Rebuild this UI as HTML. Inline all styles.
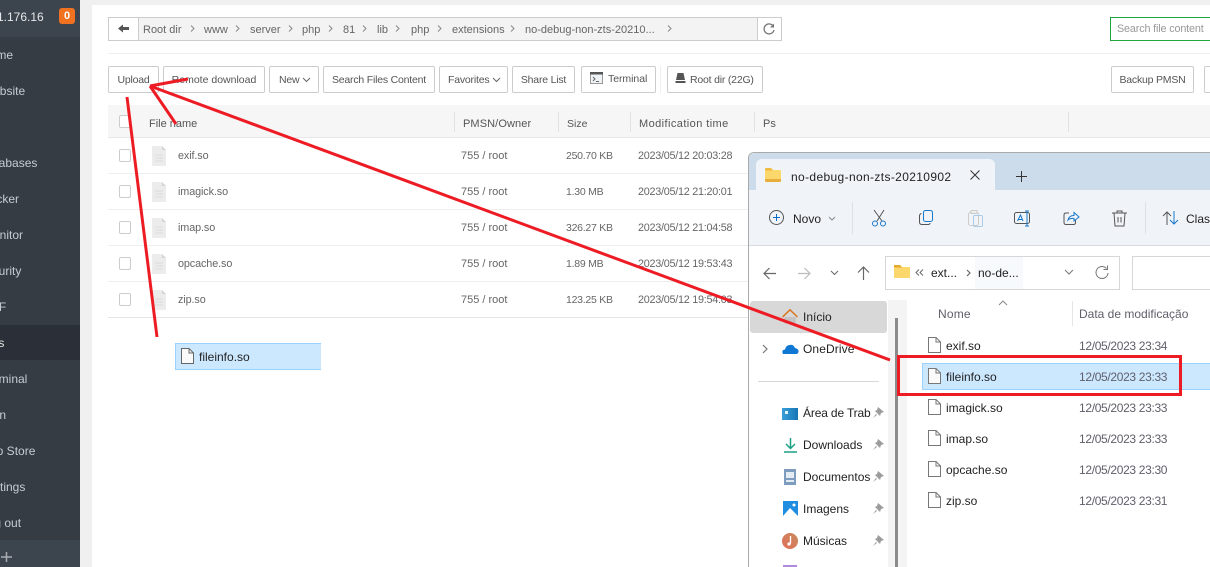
<!DOCTYPE html>
<html><head><meta charset="utf-8">
<style>
html,body{margin:0;padding:0}
body{width:1210px;height:567px;overflow:hidden;position:relative;background:#f0f0f0;font-family:"Liberation Sans",sans-serif;font-size:11px;color:#666}
.a{position:absolute;box-sizing:border-box;white-space:nowrap}
.t{position:absolute;white-space:nowrap;line-height:14px}
.s{position:absolute;white-space:nowrap;color:#c5ccd4;font-size:12px;line-height:14px;left:0}
.b{position:absolute;box-sizing:border-box;top:66px;height:27px;border:1px solid #ccc;border-radius:2px;background:#fff;color:#555;font-size:10.500px;letter-spacing:-.2px;line-height:26px;text-align:center;white-space:nowrap}
.cb{position:absolute;box-sizing:border-box;left:119px;width:12px;height:13px;border:1px solid #ccc;border-radius:2px;background:#fff}
.line{position:absolute;left:108px;width:640px;height:1px;background:#eee}
.x{font-size:12px;color:#222}
.g{font-size:12px;color:#5f5f6a}
.gd{font-size:12px;color:#5f5f6a;letter-spacing:-.33px}
.n{font-size:10.800px;letter-spacing:-.1px}
.d{font-size:10.800px;letter-spacing:-.25px}
.z{font-size:10.500px;letter-spacing:-.25px}
</style></head><body>
<div class="a" style="left:0;top:0;width:80px;height:567px;background:#353c44"></div>
<div class="a" style="left:0;top:0;width:80px;height:37px;background:#3c444d"></div>
<div class="a" style="left:0;top:540px;width:80px;height:27px;background:#3c444d"></div>
<div class="a" style="left:0;top:325px;width:80px;height:35px;background:#2b2f37"></div>
<div class="t" style="left:-3px;top:10px;font-size:12px;color:#e6e8ea">1.176.16</div>
<div class="a" style="left:59px;top:8px;width:16px;height:16px;background:#f0711f;border-radius:3px;color:#fff;font-size:11px;font-weight:bold;text-align:center;line-height:16px">0</div>
<div class="s" style="top:48px;left:-19px">Home</div>
<div class="s" style="top:84px;left:-18px">Website</div>
<div class="s" style="top:156px;left:-20px">Databases</div>
<div class="s" style="top:192px;left:-19px">Docker</div>
<div class="s" style="top:228px;left:-17px">Monitor</div>
<div class="s" style="top:264px;left:-22px">Security</div>
<div class="s" style="top:300px;left:-20px">WAF</div>
<div class="s" style="top:336px;left:-21px;color:#e8e8e8">Files</div>
<div class="s" style="top:372px;left:-18px">Terminal</div>
<div class="s" style="top:408px;left:-20px">Cron</div>
<div class="s" style="top:444px;left:-18px">App Store</div>
<div class="s" style="top:480px;left:-18px">Settings</div>
<div class="s" style="top:516px;left:-19px">Log out</div>
<svg class="a" style="left:0;top:550px" width="14" height="14"><path d="M1 7H12M6.500 2V12" stroke="#a9adb1" stroke-width="1.500" fill="none"/></svg>

<div class="a" style="left:92px;top:5px;width:1118px;height:562px;background:#fff"></div>

<div class="a" style="left:108px;top:17px;width:674px;height:24px;border:1px solid #ccc;border-radius:2px;background:#f3f3f3"></div>
<div class="a" style="left:108px;top:17px;width:31px;height:24px;border:1px solid #ccc;background:#fff"></div>
<svg class="a" style="left:118px;top:24px" width="12" height="10"><path d="M0 4.500L5 0.500V3H11V6H5V8.500Z" fill="#555"/></svg>
<div class="a" style="left:757px;top:17px;width:25px;height:24px;border:1px solid #ccc;background:#fff"></div>
<svg class="a" style="left:762px;top:22px" width="14" height="14" viewBox="0 0 14 14"><path d="M11.500 4.500A5 5 0 1 0 12 8" stroke="#777" stroke-width="1.300" fill="none"/><path d="M12 1.500V5.500H8Z" fill="#777"/></svg>
<div class="t" style="left:143px;top:23px">Root dir</div>
<div class="t" style="left:204px;top:23px">www</div>
<div class="t" style="left:250px;top:23px">server</div>
<div class="t" style="left:302px;top:23px">php</div>
<div class="t" style="left:343px;top:23px">81</div>
<div class="t" style="left:377px;top:23px">lib</div>
<div class="t" style="left:411px;top:23px">php</div>
<div class="t" style="left:452px;top:23px">extensions</div>
<div class="t" style="left:525px;top:23px">no-debug-non-zts-20210...</div>
<svg class="a" style="left:185px;top:24px" width="500" height="10" fill="none" stroke="#888" stroke-width="1"><path d="M6 2L9 5L6 8M51 2L54 5L51 8M104 2L107 5L104 8M144 2L147 5L144 8M178 2L181 5L178 8M211 2L214 5L211 8M253 2L256 5L253 8M326 2L329 5L326 8M483 2L486 5L483 8" transform="translate(0,-0.500)"/></svg>

<div class="a" style="left:108px;top:53px;width:1102px;height:1px;background:#eee"></div>
<div class="a" style="left:1110px;top:17px;width:100px;height:24px;border:1px solid #20a53a;border-right:0;color:#999;font-size:10.800px;letter-spacing:-.15px;line-height:23px;padding-left:6px">Search file content</div>

<div class="b" style="left:108px;width:51px">Upload</div>
<div class="b" style="left:163px;width:102px;letter-spacing:0">Remote download</div>
<div class="b" style="left:269px;width:50px;text-align:left;padding-left:9px">New<svg style="position:absolute;left:32px;top:10px" width="9" height="6"><path d="M1 1L4.500 4.500L8 1" stroke="#666" fill="none"/></svg></div>
<div class="b" style="left:323px;width:112px">Search Files Content</div>
<div class="b" style="left:439px;width:69px;text-align:left;padding-left:8px">Favorites<svg style="position:absolute;left:52px;top:10px" width="9" height="6"><path d="M1 1L4.500 4.500L8 1" stroke="#666" fill="none"/></svg></div>
<div class="b" style="left:512px;width:63px">Share List</div>
<div class="b" style="left:581px;width:75px;line-height:24px;text-align:left;padding-left:26px;letter-spacing:-.05px">Terminal</div>
<svg class="a" style="left:590px;top:72px" width="13" height="12"><rect x=".5" y=".5" width="12" height="11" fill="#eef3f7" stroke="#999"/><rect x="0" y="0" width="13" height="2.500" fill="#555"/><path d="M3 5L5 7L3 9M6 9.500H9" stroke="#666" fill="none"/></svg>
<div class="a" style="left:660px;top:66px;width:1px;height:27px;background:#eee"></div>
<div class="b" style="left:667px;width:96px;text-align:left;padding-left:22px">Root dir (22G)</div>
<svg class="a" style="left:675px;top:72px" width="11" height="12"><path d="M2.500 1H8.500L10 8H1Z" fill="#555"/><rect x="0.500" y="9" width="10" height="2" fill="#555"/></svg>
<div class="b" style="left:1111px;width:83px">Backup PMSN</div>
<div class="b" style="left:1204px;width:20px"></div>

<div class="a" style="left:108px;top:105px;width:1102px;height:33px;background:#f6f6f6;border-bottom:1px solid #e8e8e8"></div>
<div class="cb" style="top:115px"></div>
<div class="t" style="left:149px;top:117px;color:#555">File name</div>
<div class="a" style="left:454px;top:112px;width:1px;height:20px;background:#e2e2e2"></div>
<div class="a" style="left:558px;top:112px;width:1px;height:20px;background:#e2e2e2"></div>
<div class="a" style="left:630px;top:112px;width:1px;height:20px;background:#e2e2e2"></div>
<div class="a" style="left:754px;top:112px;width:1px;height:20px;background:#e2e2e2"></div>
<div class="a" style="left:1068px;top:112px;width:1px;height:20px;background:#e2e2e2"></div>
<div class="t" style="left:463px;top:117px;color:#555;letter-spacing:.1px">PMSN/Owner</div>
<div class="t" style="left:567px;top:117px;color:#555;font-size:10.500px">Size</div>
<div class="t" style="left:639px;top:117px;color:#555;letter-spacing:.42px">Modification time</div>
<div class="t" style="left:763px;top:117px;color:#555">Ps</div>

<div class="line" style="top:173px"></div><div class="line" style="top:209px"></div><div class="line" style="top:245px"></div><div class="line" style="top:281px"></div><div class="line" style="top:317px;background:#e6e6e6"></div>

<div class="cb" style="top:149px"></div><div class="cb" style="top:185px"></div><div class="cb" style="top:221px"></div><div class="cb" style="top:257px"></div><div class="cb" style="top:293px"></div>

<svg class="a" style="left:152px;top:146px" width="15" height="170" fill="#ececec">
<g><path d="M0 0H10L14 4V20H0Z"/><path d="M3 9H11M3 12H11M3 15H11" stroke="#dcdcdc"/><path d="M10 0L14 4H10Z" fill="#d5d5d5"/></g>
<g transform="translate(0,36)"><path d="M0 0H10L14 4V20H0Z"/><path d="M3 9H11M3 12H11M3 15H11" stroke="#dcdcdc"/><path d="M10 0L14 4H10Z" fill="#d5d5d5"/></g>
<g transform="translate(0,72)"><path d="M0 0H10L14 4V20H0Z"/><path d="M3 9H11M3 12H11M3 15H11" stroke="#dcdcdc"/><path d="M10 0L14 4H10Z" fill="#d5d5d5"/></g>
<g transform="translate(0,108)"><path d="M0 0H10L14 4V20H0Z"/><path d="M3 9H11M3 12H11M3 15H11" stroke="#dcdcdc"/><path d="M10 0L14 4H10Z" fill="#d5d5d5"/></g>
<g transform="translate(0,144)"><path d="M0 0H10L14 4V20H0Z"/><path d="M3 9H11M3 12H11M3 15H11" stroke="#dcdcdc"/><path d="M10 0L14 4H10Z" fill="#d5d5d5"/></g>
</svg>

<div class="t n" style="left:178px;top:149px">exif.so</div><div class="t" style="left:461px;top:149px">755 / root</div><div class="t z" style="left:566px;top:149px">250.70 KB</div><div class="t d" style="left:638px;top:149px">2023/05/12 20:03:28</div>
<div class="t n" style="left:178px;top:185px">imagick.so</div><div class="t" style="left:461px;top:185px">755 / root</div><div class="t z" style="left:566px;top:185px">1.30 MB</div><div class="t d" style="left:638px;top:185px">2023/05/12 21:20:01</div>
<div class="t n" style="left:178px;top:221px">imap.so</div><div class="t" style="left:461px;top:221px">755 / root</div><div class="t z" style="left:566px;top:221px">326.27 KB</div><div class="t d" style="left:638px;top:221px">2023/05/12 21:04:58</div>
<div class="t n" style="left:178px;top:257px">opcache.so</div><div class="t" style="left:461px;top:257px">755 / root</div><div class="t z" style="left:566px;top:257px">1.89 MB</div><div class="t d" style="left:638px;top:257px">2023/05/12 19:53:43</div>
<div class="t n" style="left:178px;top:293px">zip.so</div><div class="t" style="left:461px;top:293px">755 / root</div><div class="t z" style="left:566px;top:293px">123.25 KB</div><div class="t d" style="left:638px;top:293px">2023/05/12 19:54:03</div>

<div class="a" style="left:175px;top:343px;width:146px;height:27px;background:#cce8ff;border:1px solid #99d1ff;border-right:0"></div>
<svg class="a" style="left:181px;top:348px" width="13" height="16"><path d="M.5.5H8L12.500 5V15.500H.5Z" fill="#fafafa" stroke="#666"/><path d="M8 .5V5H12.500" fill="none" stroke="#666"/></svg>
<div class="t x" style="left:199px;top:350px">fileinfo.so</div>

<!-- explorer -->
<div class="a" style="left:748px;top:152px;width:462px;height:415px;background:#fff;border:1px solid #aaa;border-right:0;border-bottom:0;border-radius:6px 0 0 0"></div>
<div class="a" style="left:749px;top:153px;width:461px;height:38px;background:#cddcea;border-radius:6px 0 0 0"></div>
<div class="a" style="left:749px;top:190px;width:461px;height:56px;background:#f0f4f9;border-bottom:1px solid #d5dae0"></div>
<div class="a" style="left:756px;top:159px;width:239px;height:32px;background:#f0f4f9;border-radius:6px 6px 0 0"></div>
<svg class="a" style="left:765px;top:168px" width="16" height="14"><path d="M0 1.500Q0 0 1.500 0H6L8 2H14.500Q16 2 16 3.500V12.500Q16 14 14.500 14H1.500Q0 14 0 12.500Z" fill="#fcd76b"/><path d="M0 11H16V12.500Q16 14 14.500 14H1.500Q0 14 0 12.500Z" fill="#e9ad3c"/><path d="M0 1.500Q0 0 1.500 0H6L8 2.500H0Z" fill="#efb93f"/></svg>
<div class="t x" style="left:791px;top:170px;letter-spacing:.36px">no-debug-non-zts-20210902</div>
<svg class="a" style="left:970px;top:170px" width="10" height="10"><path d="M.5.5L9.500 9.500M9.500.5L.5 9.500" stroke="#333"/></svg>
<svg class="a" style="left:1016px;top:171px" width="11" height="11"><path d="M5.500 0V11M0 5.500H11" stroke="#333"/></svg>

<svg class="a" style="left:768px;top:209px" width="18" height="18"><circle cx="8.500" cy="8.500" r="7" fill="none" stroke="#555"/><path d="M8.500 5V12M5 8.500H12" stroke="#0a6cc4"/></svg>
<div class="t x" style="left:793px;top:212px">Novo</div>
<svg class="a" style="left:828px;top:216px" width="8" height="5"><path d="M1 1L4 4L7 1" stroke="#888" fill="none"/></svg>
<div class="a" style="left:852px;top:202px;width:1px;height:32px;background:#dde0e4"></div>
<svg class="a" style="left:871px;top:209px" width="17" height="18" fill="none"><path d="M3 1L11 12M13 1L6 12" stroke="#555"/><circle cx="4" cy="14.500" r="2.500" stroke="#1a78c9"/><circle cx="12" cy="14.500" r="2.500" stroke="#1a78c9"/></svg>
<svg class="a" style="left:919px;top:210px" width="16" height="16" fill="none"><rect x="4.500" y=".5" width="9" height="11" rx="2" stroke="#1a78c9"/><path d="M2.500 3.500Q.5 4 .5 6V12Q.5 14.500 3 14.500H9Q11 14.500 11 13" stroke="#555"/></svg>
<svg class="a" style="left:968px;top:210px" width="16" height="17" fill="none"><rect x=".5" y="2.500" width="10" height="13" rx="2" stroke="#ccc"/><rect x="5.500" y="5.500" width="9" height="11" rx="1.500" stroke="#a8cbe8"/><rect x="3" y=".5" width="6" height="3" fill="#eee" stroke="#ccc"/></svg>
<svg class="a" style="left:1014px;top:210px" width="18" height="17" fill="none"><rect x=".5" y="2.500" width="15" height="11" rx="2" stroke="#555"/><path d="M3.500 11L6.500 5L9 11M4.500 9.500H8" stroke="#1a78c9"/><path d="M11 1H15M13 1V16M11 16H15" stroke="#1a78c9"/></svg>
<svg class="a" style="left:1063px;top:210px" width="17" height="16" fill="none"><path d="M6 3H3Q1 3 1 5V12.500Q1 14.500 3 14.500H10.500Q12.500 14.500 12.500 12.500V10" stroke="#555"/><path d="M5 10Q6 5.500 11 5.500V2.500L16 7L11 11V8.500Q7 8 5 10Z" stroke="#1a78c9"/></svg>
<svg class="a" style="left:1112px;top:210px" width="15" height="17" fill="none" stroke="#555"><path d="M0 3H15M5 3V1H10V3M2 3L3 16H12L13 3M6 7V12.500M9 7V12.500"/></svg>
<div class="a" style="left:1145px;top:202px;width:1px;height:32px;background:#dde0e4"></div>
<svg class="a" style="left:1162px;top:211px" width="17" height="14" fill="none" stroke-width="1"><path d="M5 14V1M1 5L5 1L9 5" stroke="#555"/><path d="M12 0V13M8 9L12 13L16 9" stroke="#1a78c9"/></svg>
<div class="t x" style="left:1186px;top:212px">Class</div>

<svg class="a" style="left:763px;top:267px" width="13" height="13" fill="none"><path d="M1 6.500H13M6.500 1L1 6.500L6.500 12" stroke="#666" stroke-width="1.200"/></svg>
<svg class="a" style="left:798px;top:267px" width="13" height="13" fill="none"><path d="M0 6.500H12M6.500 1L12 6.500L6.500 12" stroke="#bbb" stroke-width="1.200"/></svg>
<svg class="a" style="left:830px;top:270px" width="9" height="6" fill="none"><path d="M1 1L4.500 4.500L8 1" stroke="#666"/></svg>
<svg class="a" style="left:857px;top:266px" width="13" height="14" fill="none"><path d="M6.500 14V1M1 6.500L6.500 1L12 6.500" stroke="#666" stroke-width="1.200"/></svg>
<div class="a" style="left:885px;top:256px;width:235px;height:34px;border:1px solid #d6d6d6;background:#fff"></div>
<div class="a" style="left:975px;top:257px;width:48px;height:32px;background:#f7fafd"></div>
<svg class="a" style="left:894px;top:265px" width="16" height="13"><path d="M0 1Q0 0 1 0H6L8 2H16V13H0Z" fill="#fcd76b"/><path d="M0 0H6L8 2.500H0Z" fill="#e5a92f"/></svg>
<svg class="a" style="left:915px;top:269px" width="9" height="7" fill="none" stroke="#666"><path d="M4 .5L1 3.500L4 6.500M8 .5L5 3.500L8 6.500"/></svg>
<div class="t x" style="left:931px;top:266px">ext...</div>
<svg class="a" style="left:966px;top:269px" width="6" height="8" fill="none"><path d="M1 1L4 4L1 7" stroke="#666" stroke-width="1.200"/></svg>
<div class="t x" style="left:978px;top:266px">no-de...</div>
<svg class="a" style="left:1064px;top:269px" width="10" height="6" fill="none"><path d="M1 1L5 5L9 1" stroke="#777"/></svg>
<svg class="a" style="left:1095px;top:265px" width="14" height="14" viewBox="0 0 14 14" fill="none"><path d="M11.500 3.500A6 6 0 1 0 13 8" stroke="#777"/><path d="M12.500 .5V4.500H8.500" stroke="#777"/></svg>
<div class="a" style="left:1132px;top:256px;width:90px;height:34px;border:1px solid #d6d6d6;background:#fff"></div>

<div class="a" style="left:888px;top:300px;width:19px;height:267px;background:#f4f4f4"></div>
<div class="a" style="left:895px;top:318px;width:3px;height:249px;background:#8b8b8b"></div>
<div class="a" style="left:750px;top:301px;width:137px;height:32px;background:#d8d8d8;border-radius:3px"></div>

<svg class="a" style="left:782px;top:309px" width="16" height="15" fill="none"><path d="M3 8V14H13V8" fill="#c4c4c4" stroke="#bbb"/><path d="M.5 8L8 .8L15.500 8" stroke="#d9741c" stroke-width="1.500"/></svg>
<div class="t x" style="left:803px;top:310px">Início</div>
<svg class="a" style="left:762px;top:344px" width="7" height="10" fill="none"><path d="M1 1L5 5L1 9" stroke="#777" stroke-width="1.200"/></svg>
<svg class="a" style="left:782px;top:343px" width="17" height="12"><path d="M1 11Q-1 7 3 6.500Q4 2 8 2Q11 1 13 5Q17 6 16.500 9Q16 11 14 11Z" fill="#0f78d4"/></svg>
<div class="t x" style="left:803px;top:342px;letter-spacing:.1px">OneDrive</div>
<div class="a" style="left:758px;top:381px;width:121px;height:1px;background:#d8d8d8"></div>

<div class="a" style="left:782px;top:408px;width:16px;height:12px;background:linear-gradient(90deg,#3aa0d8,#1775b5)"></div>
<div class="a" style="left:785px;top:411px;width:3px;height:3px;background:#e5f5ff"></div>
<div class="a" style="left:803px;top:406px;width:68px;height:14px;overflow:hidden;font-size:12px;color:#222;line-height:14px;letter-spacing:-.15px">Área de Trabalho</div>
<svg class="a" style="left:784px;top:438px" width="13" height="15" fill="none"><path d="M6.500 0V10M2 6L6.500 10.500L11 6" stroke="#1aa086" stroke-width="1.500"/><path d="M0 14H13" stroke="#1aa086" stroke-width="1.500"/></svg>
<div class="t x" style="left:803px;top:438px">Downloads</div>
<div class="a" style="left:784px;top:469px;width:12px;height:16px;background:#7e9cbd"></div>
<div class="a" style="left:786px;top:472px;width:8px;height:6px;background:#e4ebf3"></div>
<div class="a" style="left:786px;top:480px;width:8px;height:2px;background:#e4ebf3"></div>
<div class="t x" style="left:803px;top:470px">Documentos</div>
<svg class="a" style="left:783px;top:501px" width="15" height="15"><rect width="15" height="15" fill="#1f8ee0"/><path d="M0 15L7 7L15 15Z" fill="#fff"/><circle cx="11" cy="4" r="1.500" fill="#fff"/></svg>
<div class="t x" style="left:803px;top:502px">Imagens</div>
<svg class="a" style="left:782px;top:533px" width="16" height="16"><defs><linearGradient id="mg" x1="0" y1="1" x2="1" y2="0"><stop offset="0" stop-color="#e0705a"/><stop offset="1" stop-color="#c98a5c"/></linearGradient></defs><circle cx="8" cy="8" r="8" fill="url(#mg)"/><path d="M8.500 3V10.500" stroke="#fff" stroke-width="1.300"/><circle cx="7" cy="11" r="1.600" fill="#fff"/></svg>
<div class="t x" style="left:803px;top:534px">Músicas</div>
<div class="a" style="left:783px;top:565px;width:14px;height:2px;background:#b18ae0"></div>

<svg class="a" style="left:873px;top:407px" width="11" height="140" fill="#9c9c9c">
<g><path d="M5 0L11 5L8 6L7 9L2 4L4 3Z"/><path d="M3 7L0 11L4 8Z"/></g>
<g transform="translate(0,32)"><path d="M5 0L11 5L8 6L7 9L2 4L4 3Z"/><path d="M3 7L0 11L4 8Z"/></g>
<g transform="translate(0,64)"><path d="M5 0L11 5L8 6L7 9L2 4L4 3Z"/><path d="M3 7L0 11L4 8Z"/></g>
<g transform="translate(0,96)"><path d="M5 0L11 5L8 6L7 9L2 4L4 3Z"/><path d="M3 7L0 11L4 8Z"/></g>
<g transform="translate(0,128)"><path d="M5 0L11 5L8 6L7 9L2 4L4 3Z"/><path d="M3 7L0 11L4 8Z"/></g>
</svg>

<svg class="a" style="left:998px;top:300px" width="10" height="6" fill="none"><path d="M1 5L5 1L9 5" stroke="#888"/></svg>
<div class="t g" style="left:938px;top:307px;letter-spacing:.2px">Nome</div>
<div class="a" style="left:1072px;top:301px;width:1px;height:25px;background:#e5e5e5"></div>
<div class="t g" style="left:1079px;top:307px">Data de modificação</div>

<div class="a" style="left:922px;top:363px;width:288px;height:27px;background:#cce8ff;border:1px solid #99d1ff;border-right:0"></div>

<svg class="a" style="left:928px;top:337px" width="13" height="172">
<g fill="#fff" stroke="#777">
<path d="M.5.5H8L12.500 5V15.500H.5Z"/><path d="M8 .5V5H12.500" fill="none"/>
<path transform="translate(0,31)" d="M.5.5H8L12.500 5V15.500H.5Z" fill="#fafafa"/><path transform="translate(0,31)" d="M8 .5V5H12.500" fill="none"/>
<path transform="translate(0,62)" d="M.5.5H8L12.500 5V15.500H.5Z"/><path transform="translate(0,62)" d="M8 .5V5H12.500" fill="none"/>
<path transform="translate(0,93)" d="M.5.5H8L12.500 5V15.500H.5Z"/><path transform="translate(0,93)" d="M8 .5V5H12.500" fill="none"/>
<path transform="translate(0,124)" d="M.5.5H8L12.500 5V15.500H.5Z"/><path transform="translate(0,124)" d="M8 .5V5H12.500" fill="none"/>
<path transform="translate(0,155)" d="M.5.5H8L12.500 5V15.500H.5Z"/><path transform="translate(0,155)" d="M8 .5V5H12.500" fill="none"/>
</g></svg>

<div class="t x" style="left:946px;top:339px">exif.so</div><div class="t gd" style="left:1079px;top:339px">12/05/2023 23:34</div>
<div class="t x" style="left:946px;top:370px">fileinfo.so</div><div class="t gd" style="left:1079px;top:370px">12/05/2023 23:33</div>
<div class="t x" style="left:946px;top:401px">imagick.so</div><div class="t gd" style="left:1079px;top:401px">12/05/2023 23:33</div>
<div class="t x" style="left:946px;top:432px">imap.so</div><div class="t gd" style="left:1079px;top:432px">12/05/2023 23:33</div>
<div class="t x" style="left:946px;top:463px">opcache.so</div><div class="t gd" style="left:1079px;top:463px">12/05/2023 23:30</div>
<div class="t x" style="left:946px;top:494px">zip.so</div><div class="t gd" style="left:1079px;top:494px">12/05/2023 23:31</div>

<!-- annotations -->
<svg class="a" style="left:0;top:0" width="1210" height="567" fill="none" stroke="#ed1c24">
<path d="M127 97L157 337" stroke-width="3"/>
<path d="M150 86L890 360" stroke-width="3"/>
<path d="M150 86L188 79" stroke-width="3"/>
<path d="M150 86L176 124" stroke-width="3"/>
<rect x="898.500" y="356.500" width="282" height="38" stroke-width="3"/>
</svg>
</body></html>
